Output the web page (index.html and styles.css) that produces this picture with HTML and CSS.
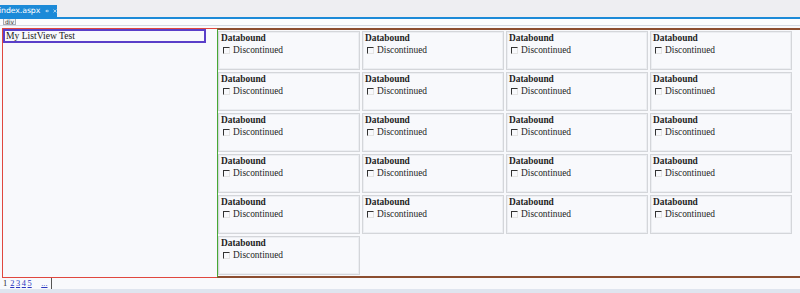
FILE: index.html
```html
<!DOCTYPE html>
<html>
<head>
<meta charset="utf-8">
<link rel="stylesheet" href="styles.css">
</head>
<body>
<div class="ide">
  <div class="tabbar">
    <div class="tab">
      <span class="tab-name">index.aspx</span>
      <svg class="pin" width="8" height="8" viewBox="0 0 8 8"><path d="M0.5 4H3M3 2V6M3 2.5H6.5V5.5H3M6.5 3.5V4.5" fill="none" stroke="#fff" stroke-width="1"/></svg>
      <svg class="close" width="8" height="8" viewBox="0 0 8 8"><path d="M1 1L7 7M7 1L1 7" stroke="#fff" stroke-width="1.3"/></svg>
    </div>
  </div>
  <div class="tabline"></div>
  <div class="crumbs"><span class="tag">div</span></div>
  <div class="main">
    <div class="side">
      <div class="title">My ListView Test</div>
    </div>
    <div class="list">
      <div class="grid">
        <div class="cell"><b>Databound</b><span class="row"><i class="cb"></i>Discontinued</span></div>
        <div class="cell"><b>Databound</b><span class="row"><i class="cb"></i>Discontinued</span></div>
        <div class="cell"><b>Databound</b><span class="row"><i class="cb"></i>Discontinued</span></div>
        <div class="cell"><b>Databound</b><span class="row"><i class="cb"></i>Discontinued</span></div>
        <div class="cell"><b>Databound</b><span class="row"><i class="cb"></i>Discontinued</span></div>
        <div class="cell"><b>Databound</b><span class="row"><i class="cb"></i>Discontinued</span></div>
        <div class="cell"><b>Databound</b><span class="row"><i class="cb"></i>Discontinued</span></div>
        <div class="cell"><b>Databound</b><span class="row"><i class="cb"></i>Discontinued</span></div>
        <div class="cell"><b>Databound</b><span class="row"><i class="cb"></i>Discontinued</span></div>
        <div class="cell"><b>Databound</b><span class="row"><i class="cb"></i>Discontinued</span></div>
        <div class="cell"><b>Databound</b><span class="row"><i class="cb"></i>Discontinued</span></div>
        <div class="cell"><b>Databound</b><span class="row"><i class="cb"></i>Discontinued</span></div>
        <div class="cell"><b>Databound</b><span class="row"><i class="cb"></i>Discontinued</span></div>
        <div class="cell"><b>Databound</b><span class="row"><i class="cb"></i>Discontinued</span></div>
        <div class="cell"><b>Databound</b><span class="row"><i class="cb"></i>Discontinued</span></div>
        <div class="cell"><b>Databound</b><span class="row"><i class="cb"></i>Discontinued</span></div>
        <div class="cell"><b>Databound</b><span class="row"><i class="cb"></i>Discontinued</span></div>
        <div class="cell"><b>Databound</b><span class="row"><i class="cb"></i>Discontinued</span></div>
        <div class="cell"><b>Databound</b><span class="row"><i class="cb"></i>Discontinued</span></div>
        <div class="cell"><b>Databound</b><span class="row"><i class="cb"></i>Discontinued</span></div>
        <div class="cell"><b>Databound</b><span class="row"><i class="cb"></i>Discontinued</span></div>
      </div>
    </div>
  </div>
  <div class="pager">
    <span class="cur">1</span>
    <a class="first">2</a><a>3</a><a>4</a><a>5</a><a class="more">...</a>
    <span class="sep"></span>
  </div>
  <div class="status"></div>
</div>
</body>
</html>
```

FILE: styles.css
```css
* { box-sizing: border-box; }
html, body { margin: 0; padding: 0; }
body { width: 800px; height: 293px; overflow: hidden; background: #f8f9fc; font-family: "Liberation Serif", "Times New Roman", serif; }
.ide { display: flex; flex-direction: column; width: 800px; height: 293px; }

.tabbar { height: 17px; background: #eeeef2; display: flex; align-items: flex-end; }
.tab { height: 12px; width: 60px; margin-left: -3px; background: #1c8ad8; display: flex; align-items: center; padding-left: 2px; gap: 3px; }
.tab-name { font-family: "DejaVu Sans", sans-serif; font-size: 7.8px; color: #fff; letter-spacing: -0.1px; line-height: 12px; }
.pin { margin-left: 2px; }
.close { margin-left: 1px; }
.tabline { height: 2px; background: #1c8ad8; }

.crumbs { height: 7px; background: #fbfcfe; border-bottom: 1px solid #d3d9e3; padding-left: 3px; display: flex; align-items: flex-start; }
.tag { font-family: "DejaVu Sans", sans-serif; font-size: 6px; line-height: 5px; height: 6px; width: 13px; text-align: center; border: 1px solid #a8acb4; border-top: none; background: #f1f2f5; color: #333; }

.main { height: 250px; margin-top: 2px; display: flex; }
.side { width: 215px; margin-left: 2px; border: 1px solid #e0473e; border-right: none; }
.title { width: 203px; height: 14px; border: 2px solid #5a3fc9; font-size: 9.6px; line-height: 10px; color: #222; padding-left: 1px; }

.list { flex: 1; border-left: 1.5px solid #46a834; border-top: 2px solid #8c4e30; border-bottom: 2px solid #8c4e30; padding: 1px 0 1px 0; }
.grid { display: grid; grid-template-columns: repeat(4, 142px); grid-auto-rows: 39px; gap: 2px; }
.cell { border: 1px solid #d4d6da; box-shadow: inset 0 0 0 1px #eceef2; padding: 0 0 0 2px; display: flex; flex-direction: column; font-size: 9.4px; line-height: 12px; color: #1e1e1e; }
.cell b { font-weight: bold; }
.row { display: flex; align-items: center; }
.cb { display: inline-block; width: 7px; height: 7px; margin: 1px 3px 0 2px; border-top: 1px solid #333; border-left: 1px solid #333; border-right: 1px solid #e4e4e4; border-bottom: 1px solid #e4e4e4; }

.pager { height: 11px; display: flex; align-items: flex-start; padding-left: 3px; padding-top: 1px; font-size: 8.4px; line-height: 9px; color: #222; }
.pager a { color: #2a36c0; text-decoration: underline; margin-left: 1.6px; }
.pager .first { margin-left: 3px; }
.pager .more { margin-left: 9.5px; }
.sep { width: 1px; height: 11px; margin-top: -1px; background: #555; margin-left: 3px; }
.status { flex: 1; background: #dfe5ef; }
```
